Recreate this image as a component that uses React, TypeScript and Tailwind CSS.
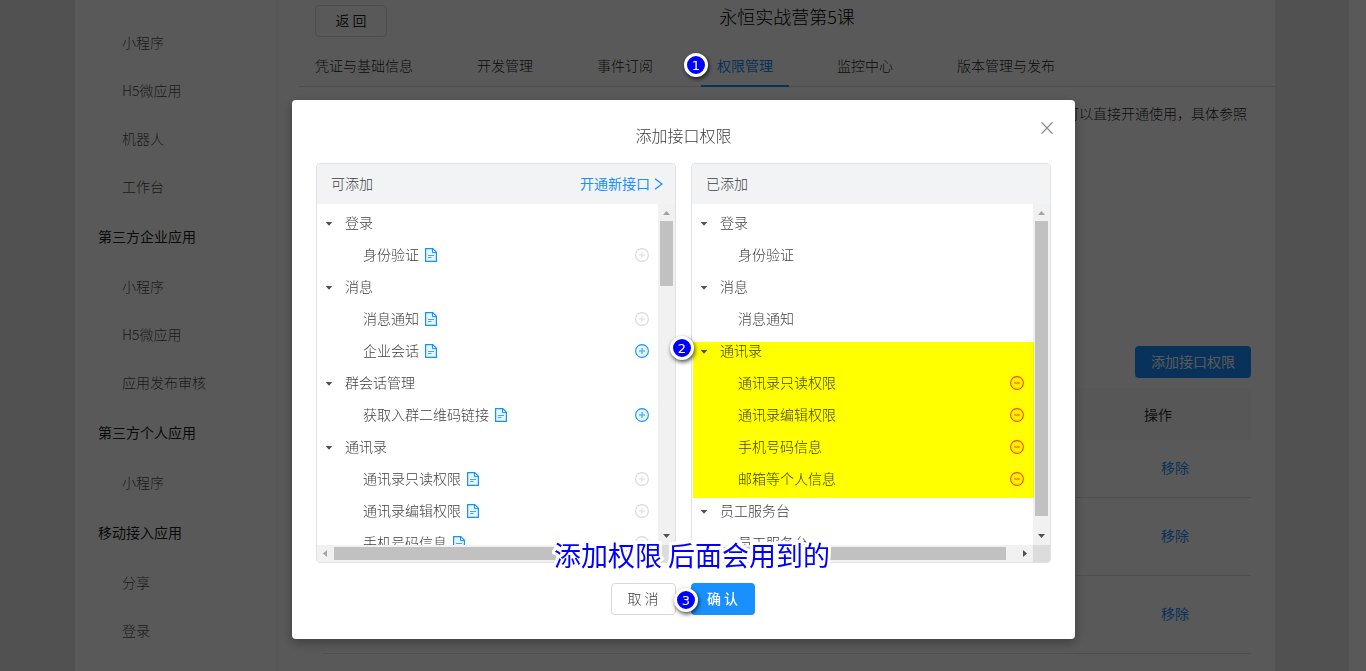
import React from "react";

type Item = { label: string; enabled?: boolean };
type Group = { label: string; items: Item[] };

const sideNav: { title?: string; links: string[] }[] = [
  { links: ["小程序", "H5微应用", "机器人", "工作台"] },
  { title: "第三方企业应用", links: ["小程序", "H5微应用", "应用发布审核"] },
  { title: "第三方个人应用", links: ["小程序"] },
  { title: "移动接入应用", links: ["分享", "登录"] },
];

const tabs = ["凭证与基础信息", "开发管理", "事件订阅", "权限管理", "监控中心", "版本管理与发布"];

const available: Group[] = [
  { label: "登录", items: [{ label: "身份验证" }] },
  { label: "消息", items: [{ label: "消息通知" }, { label: "企业会话", enabled: true }] },
  { label: "群会话管理", items: [{ label: "获取入群二维码链接", enabled: true }] },
  {
    label: "通讯录",
    items: [{ label: "通讯录只读权限" }, { label: "通讯录编辑权限" }, { label: "手机号码信息" }],
  },
];

const added: Group[] = [
  { label: "登录", items: [{ label: "身份验证" }] },
  { label: "消息", items: [{ label: "消息通知" }] },
  {
    label: "通讯录",
    items: [
      { label: "通讯录只读权限", enabled: true },
      { label: "通讯录编辑权限", enabled: true },
      { label: "手机号码信息", enabled: true },
      { label: "邮箱等个人信息", enabled: true },
    ],
  },
  { label: "员工服务台", items: [{ label: "员工服务台" }] },
];

function DocIcon() {
  return (
    <svg width="12" height="14" viewBox="0 0 12 14" fill="none" stroke="#1890ff" aria-hidden="true">
      <path d="M.6.6h7.2l3.6 3.6v9.2H.6z" fill="#e6f7ff" strokeWidth="1.2" />
      <path d="M7.5.6v4h3.9" strokeWidth="1" />
      <path d="M3 7.5h6M3 9.5h3.5" strokeWidth="1" strokeOpacity=".8" />
    </svg>
  );
}

function CircleIcon({ stroke, fill, plus }: { stroke: string; fill: string; plus?: boolean }) {
  return (
    <svg width="14" height="14" viewBox="0 0 14 14" stroke={stroke} aria-hidden="true">
      <circle cx="7" cy="7" r="6.4" fill={fill} strokeWidth="1.1" />
      <path d={plus ? "M4 7h6M7 4v6" : "M4 7h6"} strokeWidth="1.6" strokeOpacity=".65" />
    </svg>
  );
}

function ScrollArrow({ dir, dim }: { dir: "up" | "down" | "left" | "right"; dim?: boolean }) {
  const points = {
    up: "5,11 12,11 8.5,7",
    down: "5,6 12,6 8.5,10",
    left: "10,5 10,12 6,8.5",
    right: "7,5 7,12 11,8.5",
  }[dir];
  return (
    <svg width="17" height="17" viewBox="0 0 17 17" className="shrink-0" aria-hidden="true">
      <polygon points={points} fill={dim ? "#a3a3a3" : "#505050"} />
    </svg>
  );
}

function Tree({ groups, kind }: { groups: Group[]; kind: "add" | "remove" }) {
  return (
    <ul className="pt-[3px] text-sm text-[#404040]">
      {groups.map((group) => (
        <li key={group.label}>
          <div className="flex h-8 items-center">
            <svg width="8" height="6" viewBox="0 0 8 6" className="mr-3 ml-2" aria-hidden="true">
              <path d="M.7 2h6.6L4 5.8z" fill="#505050" />
            </svg>
            <span className="pb-0.5">{group.label}</span>
          </div>
          <ul>
            {group.items.map((item) => (
              <li key={item.label} className="flex h-8 items-center pr-[9px] pl-[46px]">
                <span className="pb-0.5">{item.label}</span>
                {kind === "add" && (
                  <a href="#doc" aria-label={item.label + "文档"} className="ml-[6px]">
                    <DocIcon />
                  </a>
                )}
                {kind === "add" && (
                  <button type="button" aria-label={"添加" + item.label} disabled={!item.enabled} className="ml-auto">
                    {item.enabled ? (
                      <CircleIcon stroke="#1890ff" fill="#e6f7ff" plus />
                    ) : (
                      <CircleIcon stroke="#d9d9d9" fill="#ffffff" plus />
                    )}
                  </button>
                )}
                {kind === "remove" && item.enabled && (
                  <button type="button" aria-label={"移除" + item.label} className="ml-auto">
                    <CircleIcon stroke="#ff4d4f" fill="#fff2f0" />
                  </button>
                )}
              </li>
            ))}
          </ul>
        </li>
      ))}
    </ul>
  );
}

function Panel({
  title,
  link,
  thumb,
  children,
}: {
  title: string;
  link?: string;
  thumb: string;
  children: React.ReactNode;
}) {
  return (
    <section className="flex h-[400px] flex-1 flex-col overflow-hidden rounded border border-[#dfe1e3]">
      <header className="flex h-10 shrink-0 items-center justify-between bg-[#f2f3f5] pr-3 pl-[14px] text-sm text-[#404040]">
        <h3 className="pb-0.5">{title}</h3>
        {link && (
          <a href="#open" className="flex items-center gap-1 font-normal text-[#1890ff]">
            <span className="pb-0.5">{link}</span>
            <svg width="9" height="12" viewBox="0 0 9 12" fill="none" stroke="#1890ff" strokeWidth="1.3" aria-hidden="true">
              <path d="M1 .8 8 6 1 11.2" />
            </svg>
          </a>
        )}
      </header>
      <div className="flex min-h-0 flex-1">
        <div className="min-w-0 flex-1 overflow-hidden">{children}</div>
        <div className="flex w-[17px] flex-col items-center bg-[#f1f1f1]">
          <ScrollArrow dir="up" dim />
          <div className={"w-[13px] bg-[#c1c1c1] " + thumb} />
          <div className="mt-auto flex">
            <ScrollArrow dir="down" />
          </div>
        </div>
      </div>
      <div className="flex h-[17px] shrink-0">
        <div className="flex flex-1 items-center bg-[#f1f1f1]">
          <ScrollArrow dir="left" dim />
          <div className="h-[13px] w-[297px] bg-[#c1c1c1]" />
          <div className="ml-auto flex">
            <ScrollArrow dir="right" />
          </div>
        </div>
        <div className="w-[17px] bg-[#dcdcdc]" />
      </div>
    </section>
  );
}

function Badge({ n, place }: { n: number; place: string }) {
  return (
    <span
      className={
        "absolute flex size-6 items-center justify-center rounded-full border-3 border-white bg-[#0000ff] font-['DejaVu_Sans',sans-serif] text-[13px] leading-none font-normal text-white shadow-[1px_2px_4px_rgba(0,0,0,0.7)] " +
        place
      }
    >
      {n}
    </span>
  );
}

function Page() {
  return (
    <div className="flex h-full bg-white">
      <div className="flex flex-1 justify-center bg-[#e8e8e8] pl-px">
        <div className="flex w-[1200px] bg-white">
          <nav className="w-[200px] shrink-0 pt-[18px] text-sm text-black/75">
            {sideNav.map((section, i) => (
              <div key={i}>
                {section.title && (
                  <h2 className="flex h-[52px] items-center pl-[23px] font-normal text-black/90">{section.title}</h2>
                )}
                {section.links.map((label) => (
                  <a key={label} href="#nav" className="flex h-12 items-center pl-[47px]">
                    {label}
                  </a>
                ))}
              </div>
            ))}
          </nav>
          <div className="mr-5 w-1 shrink-0 bg-[#fafafa]" />
          <main className="flex min-w-0 flex-1 flex-col">
            <div className="grid h-[45px] grid-cols-[1fr_auto_1fr] items-start px-4 pt-[5px]">
              <button
                type="button"
                className="h-8 w-[72px] rounded border border-[#d9d9d9] pb-0.5 text-sm font-normal text-black/85"
              >
                返 回
              </button>
              <h1 className="text-lg leading-[22px] text-black">永恒实战营第5课</h1>
            </div>
            <div role="tablist" className="flex h-[42px] gap-8 border-b border-[#e0e0e0] text-sm text-black/90">
              {tabs.map((tab) => (
                <button
                  key={tab}
                  type="button"
                  role="tab"
                  aria-selected={tab === "权限管理"}
                  className={
                    tab === "权限管理"
                      ? "-mb-px border-b-2 border-[#1890ff] px-4 font-normal text-[#1890ff]"
                      : "-mb-px border-b-2 border-transparent px-4"
                  }
                >
                  {tab}
                </button>
              ))}
            </div>
            <p className="mt-[14px] pr-7 text-right text-sm leading-6 text-black/90">可以直接开通使用，具体参照</p>
            <div className="mt-[221px] flex flex-col pr-6 pl-6">
              <button
                type="button"
                className="h-8 w-[116px] self-end rounded bg-[#1890ff] pb-0.5 text-sm font-normal text-white"
              >
                添加接口权限
              </button>
              <table className="mt-[10px] w-full table-fixed text-left text-sm">
                <thead>
                  <tr className="h-[52px] bg-[#fafafa] text-black/85">
                    <th className="rounded-tl" />
                    <th className="w-[123px] rounded-tr pl-4 font-normal">操作</th>
                  </tr>
                </thead>
                <tbody>
                  <tr className="h-[57px] border-b border-[#e3e3e3]">
                    <td />
                    <td className="pb-0.5 pl-[33px]">
                      <a href="#remove" className="font-normal text-[#1890ff]">移除</a>
                    </td>
                  </tr>
                  {[1, 2].map((n) => (
                    <tr key={n} className="h-[78px] border-b border-[#e3e3e3]">
                      <td />
                      <td className="pb-0.5 pl-[33px]">
                        <a href="#remove" className="font-normal text-[#1890ff]">移除</a>
                      </td>
                    </tr>
                  ))}
                </tbody>
              </table>
            </div>
          </main>
        </div>
      </div>
      <div className="w-[17px] shrink-0" />
    </div>
  );
}

export default function App() {
  return (
    <div className="h-screen overflow-hidden font-['Noto_Sans_CJK_SC',sans-serif] font-light">
      <Page />
      <div className="fixed inset-0 flex items-start justify-center bg-black/65 pt-[100px] pl-px">
        <div
          role="dialog"
          aria-label="添加接口权限"
          className="relative w-[783px] rounded bg-white px-6 pb-6 shadow-[0_4px_12px_rgba(0,0,0,0.3)]"
        >
          <div className="flex h-[63px] items-center justify-center pt-[7px]">
            <h2 className="text-base text-[#404040]">添加接口权限</h2>
            <button type="button" aria-label="关闭" className="absolute top-[22px] right-[22px]">
              <svg width="12" height="12" viewBox="0 0 12 12" stroke="#8c8c8c" strokeWidth="1.3" aria-hidden="true">
                <path d="M.5.3 11.5 11.7M11.5.3.5 11.7" />
              </svg>
            </button>
          </div>
          <div className="flex gap-[15px]">
            <Panel title="可添加" link="开通新接口" thumb="h-[65px]">
              <Tree groups={available} kind="add" />
            </Panel>
            <Panel title="已添加" thumb="h-[295px]">
              <Tree groups={added} kind="remove" />
            </Panel>
          </div>
          <div className="mt-5 flex justify-center gap-[15px] pr-0.5">
            <button
              type="button"
              className="h-8 w-[65px] rounded border border-[#d9d9d9] pb-0.5 text-sm text-[#404040]"
            >
              取 消
            </button>
            <button type="button" className="h-8 w-16 rounded bg-[#1890ff] pb-0.5 text-sm font-medium text-white">
              确 认
            </button>
          </div>

          <div className="pointer-events-none absolute top-[242px] left-[401px] h-[156px] w-[341px] bg-[#ffff00] mix-blend-multiply" />
          <Badge n={1} place="-top-[47px] left-[392px]" />
          <Badge n={2} place="top-[236px] left-[378px]" />
          <Badge n={3} place="top-[488px] left-[382px]" />
          <p className="absolute top-[435px] left-[262px] text-[27px] leading-10 font-normal whitespace-nowrap text-[#0000ff] [-webkit-text-stroke:6px_white] [paint-order:stroke_fill]">
            添加权限 后面会用到的
          </p>
        </div>
      </div>
    </div>
  );
}
